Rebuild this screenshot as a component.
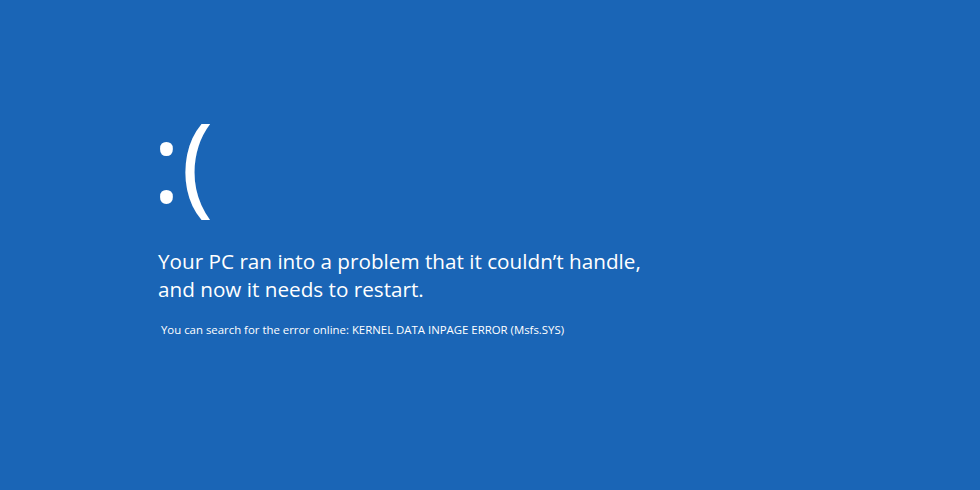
export default function App() {
  return (
    <div
      className="w-[980px] h-[490px] bg-[#1a65b6] text-white overflow-hidden"
      style={{ fontFamily: '"Open Sans", "Noto Sans", sans-serif' }}
    >
      <div className="pl-[152px] pt-[83px]">
        <div className="text-[110px] leading-[154px] h-[154px]">:(</div>
        <div className="mt-[10px] pl-[6px] text-[20.7px] leading-[28px]">
          <p>Your PC ran into a problem that it couldn’t handle,</p>
          <p>and now it needs to restart.</p>
        </div>
        <p className="mt-[20px] pl-[9px] text-[11.4px] leading-[14px]">
          You can search for the error online: KERNEL DATA INPAGE ERROR (Msfs.SYS)
        </p>
      </div>
    </div>
  );
}
